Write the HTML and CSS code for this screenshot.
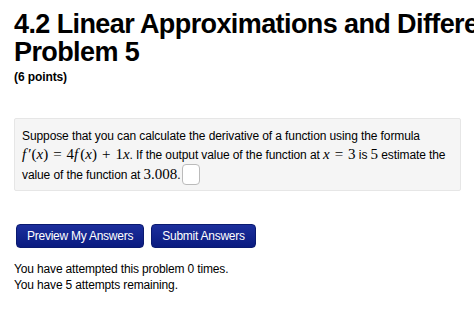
FILE: index.html
```html
<!DOCTYPE html>
<html>
<head>
<meta charset="utf-8">
<link rel="stylesheet" href="styles.css">
</head>
<body>
<div class="page">
  <h1 class="title"><span class="line">4.2 Linear Approximations and Differentials:</span><span class="line">Problem 5</span></h1>
  <div class="points">(6 points)</div>
  <div class="problem">
    Suppose that you can calculate the derivative of a function using the formula
    <span class="m"><i class="fn">f</i>′(<i>x</i>)<span class="op">=</span>4<i class="fn">f</i>(<i>x</i>)<span class="op">+</span>1<i>x</i></span>. If the output value of the function at <span class="m"><i>x</i><span class="op">=</span>3</span> is <span class="m">5</span> estimate the value of the function at <span class="m">3.008</span>.<span class="answer"></span>
  </div>
  <div class="buttons">
    <button class="btn">Preview My Answers</button>
    <button class="btn">Submit Answers</button>
  </div>
  <div class="attempts">
    <div>You have attempted this problem 0 times.</div>
    <div>You have 5 attempts remaining.</div>
  </div>
</div>
</body>
</html>
```
FILE: styles.css
```css
html, body {
  margin: 0;
  padding: 0;
  background: #fff;
}
body {
  font-family: "Liberation Sans", Arial, sans-serif;
  color: #000;
  width: 474px;
  height: 313px;
  overflow: hidden;
}
.page {
  width: 474px;
  height: 313px;
  overflow: hidden;
  box-sizing: border-box;
  padding: 10px 0 0 14px;
}
.title {
  margin: 0;
  font-size: 27px;
  line-height: 28px;
  font-weight: bold;
  letter-spacing: -0.6px;
}
.title .line {
  display: block;
  white-space: nowrap;
}
.points {
  font-size: 12px;
  font-weight: bold;
  margin-top: 4px;
  letter-spacing: -0.1px;
}
.problem {
  margin-top: 34px;
  width: 447px;
  box-sizing: border-box;
  background: #f5f5f5;
  border: 1px solid #e6e6e6;
  border-radius: 2px;
  padding: 8px 7px 5px 7px;
  font-size: 12px;
  line-height: 18.5px;
  letter-spacing: -0.1px;
}
.m {
  font-family: "Liberation Serif", "Times New Roman", serif;
  font-size: 15px;
  line-height: 1;
  letter-spacing: 0;
  white-space: nowrap;
}
.m .fn {
  margin-right: 2px;
}
.m .op {
  margin: 0 5px;
}
.answer {
  display: inline-block;
  width: 18px;
  height: 21px;
  border: 1px solid #bbb;
  border-radius: 4px;
  background: #fff;
  vertical-align: -6px;
  margin-left: 1px;
  box-sizing: border-box;
  line-height: 1;
}
.buttons {
  display: flex;
  gap: 7px;
  margin-top: 33px;
  margin-left: 2px;
}
.btn {
  font-family: "Liberation Sans", Arial, sans-serif;
  font-size: 12px;
  letter-spacing: -0.25px;
  color: #fff;
  border: 1px solid #0a1a70;
  border-radius: 4px;
  background: linear-gradient(#1c2f9c, #0a1b80);
  height: 24px;
  padding: 0 10px;
}
.attempts {
  margin-top: 13px;
  font-size: 12px;
  line-height: 16px;
  letter-spacing: -0.15px;
}
```
